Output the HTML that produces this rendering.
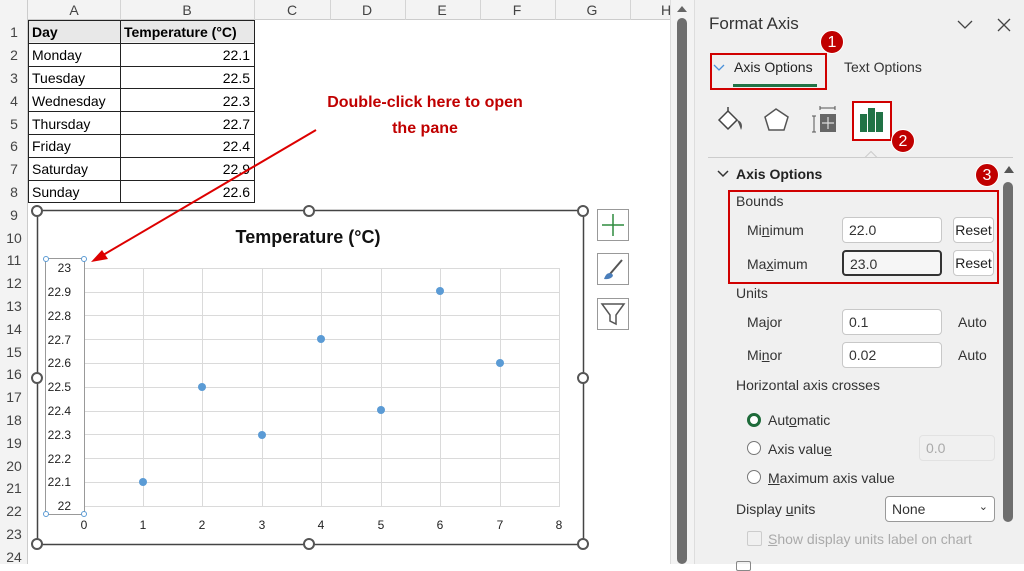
<!DOCTYPE html>
<html><head><meta charset="utf-8"><style>
*{margin:0;padding:0;box-sizing:border-box}
body{width:1024px;height:564px;overflow:hidden;background:#fff;font-family:"Liberation Sans",sans-serif;position:relative}
.a{position:absolute}
.t{position:absolute;white-space:nowrap}
.cell{position:absolute;font-size:14px;color:#000}
.pn{font-size:14px;color:#333}
.inp{position:absolute;background:#fff;border:1px solid #c8c8c8;border-radius:4px;font-size:14px;color:#333;padding:4px 6px}
.btn{position:absolute;background:#fff;border:1px solid #c8c8c8;border-radius:4px;font-size:14px;color:#222;text-align:center;padding-top:4px}
.badge{position:absolute;width:24px;height:24px;border-radius:12px;background:#c00000;color:#fff;font-size:16px;text-align:center;line-height:24px;border:1px solid #fff}
.rad{position:absolute;width:14px;height:14px;border-radius:7px;border:1px solid #777;background:#fff}
</style></head><body>
<!-- sheet headers -->
<div class="a" style="left:0;top:0;width:670px;height:20px;background:#f3f3f3;border-bottom:1px solid #ccc"></div>
<div class="a" style="left:0;top:0;width:28px;height:564px;background:#f3f3f3;border-right:1px solid #ccc"></div>
<svg class="a" style="left:0;top:0" width="670" height="564">
<g stroke="#d4d4d4" stroke-width="1">
<line x1="120.5" y1="0" x2="120.5" y2="20"/><line x1="254.5" y1="0" x2="254.5" y2="20"/><line x1="330.5" y1="0" x2="330.5" y2="20"/><line x1="405.5" y1="0" x2="405.5" y2="20"/><line x1="480.5" y1="0" x2="480.5" y2="20"/><line x1="555.5" y1="0" x2="555.5" y2="20"/><line x1="630.5" y1="0" x2="630.5" y2="20"/>
</g>
<g font-family="Liberation Sans" font-size="14" fill="#444" text-anchor="middle">
<text x="74" y="15">A</text><text x="187" y="15">B</text><text x="292" y="15">C</text><text x="367" y="15">D</text><text x="442" y="15">E</text><text x="517" y="15">F</text><text x="592" y="15">G</text><text x="666" y="15">H</text>
</g>
<g font-family="Liberation Sans" font-size="14" fill="#444" text-anchor="middle" id="rn"></g>
<g stroke="#e2e2e2"><script></script></g>
</svg>
<svg class="a" style="left:0;top:0" width="670" height="564">
<g font-family="Liberation Sans" font-size="14" fill="#444" text-anchor="middle">
<text x="14" y="37">1</text><text x="14" y="60">2</text><text x="14" y="83">3</text><text x="14" y="106">4</text><text x="14" y="129">5</text><text x="14" y="151">6</text><text x="14" y="174">7</text><text x="14" y="197">8</text><text x="14" y="220">9</text><text x="14" y="243">10</text><text x="14" y="265">11</text><text x="14" y="288">12</text><text x="14" y="311">13</text><text x="14" y="334">14</text><text x="14" y="357">15</text><text x="14" y="379">16</text><text x="14" y="402">17</text><text x="14" y="425">18</text><text x="14" y="448">19</text><text x="14" y="471">20</text><text x="14" y="493">21</text><text x="14" y="516">22</text><text x="14" y="539">23</text><text x="14" y="562">24</text>
</g>
<rect x="28.5" y="20.5" width="92" height="22" fill="#e8e8e8"/>
<rect x="120.5" y="20.5" width="134" height="22" fill="#e8e8e8"/>
<g stroke="#222" fill="none">
<rect x="28.5" y="20.5" width="226" height="182"/>
<line x1="120.5" y1="20" x2="120.5" y2="203"/>
<line x1="28" y1="43.5" x2="255" y2="43.5"/><line x1="28" y1="66.5" x2="255" y2="66.5"/><line x1="28" y1="88.5" x2="255" y2="88.5"/><line x1="28" y1="111.5" x2="255" y2="111.5"/><line x1="28" y1="134.5" x2="255" y2="134.5"/><line x1="28" y1="157.5" x2="255" y2="157.5"/><line x1="28" y1="180.5" x2="255" y2="180.5"/>
</g>
<g font-family="Liberation Sans" font-size="14" fill="#000">
<text x="32" y="37" font-weight="bold">Day</text><text x="124" y="37" font-weight="bold">Temperature (°C)</text>
<text x="32" y="60">Monday</text><text x="32" y="83">Tuesday</text><text x="32" y="106">Wednesday</text><text x="32" y="129">Thursday</text><text x="32" y="151">Friday</text><text x="32" y="174">Saturday</text><text x="32" y="197">Sunday</text>
</g>
<g font-family="Liberation Sans" font-size="14" fill="#000" text-anchor="end">
<text x="250" y="60">22.1</text><text x="250" y="83">22.5</text><text x="250" y="106">22.3</text><text x="250" y="129">22.7</text><text x="250" y="151">22.4</text><text x="250" y="174">22.9</text><text x="250" y="197">22.6</text>
</g>
<!-- chart -->
<rect x="37.5" y="210.5" width="546" height="334" fill="#fff" stroke="#444" stroke-width="1.5"/>
<text x="308" y="243" font-family="Liberation Sans" font-size="18" font-weight="bold" text-anchor="middle" fill="#111">Temperature (°C)</text>
<g stroke="#dadada">
<line x1="84" y1="268.5" x2="560" y2="268.5"/><line x1="84" y1="292.5" x2="560" y2="292.5"/><line x1="84" y1="315.5" x2="560" y2="315.5"/><line x1="84" y1="339.5" x2="560" y2="339.5"/><line x1="84" y1="363.5" x2="560" y2="363.5"/><line x1="84" y1="387.5" x2="560" y2="387.5"/><line x1="84" y1="411.5" x2="560" y2="411.5"/><line x1="84" y1="434.5" x2="560" y2="434.5"/><line x1="84" y1="458.5" x2="560" y2="458.5"/><line x1="84" y1="482.5" x2="560" y2="482.5"/><line x1="84" y1="506.5" x2="560" y2="506.5"/>
<line x1="143.5" y1="268" x2="143.5" y2="506"/><line x1="202.5" y1="268" x2="202.5" y2="506"/><line x1="262.5" y1="268" x2="262.5" y2="506"/><line x1="321.5" y1="268" x2="321.5" y2="506"/><line x1="381.5" y1="268" x2="381.5" y2="506"/><line x1="440.5" y1="268" x2="440.5" y2="506"/><line x1="500.5" y1="268" x2="500.5" y2="506"/><line x1="559.5" y1="268" x2="559.5" y2="506"/>
</g>
<rect x="45.5" y="258.5" width="39" height="256" fill="none" stroke="#999"/>
<g fill="#fff" stroke="#5b9bd5"><circle cx="46" cy="259" r="2.5"/><circle cx="84" cy="259" r="2.5"/><circle cx="46" cy="514" r="2.5"/><circle cx="84" cy="514" r="2.5"/></g>
<g font-family="Liberation Sans" font-size="12" fill="#222" text-anchor="end">
<text x="71" y="272">23</text><text x="71" y="296">22.9</text><text x="71" y="320">22.8</text><text x="71" y="344">22.7</text><text x="71" y="367">22.6</text><text x="71" y="391">22.5</text><text x="71" y="415">22.4</text><text x="71" y="439">22.3</text><text x="71" y="463">22.2</text><text x="71" y="486">22.1</text><text x="71" y="510">22</text>
</g>
<g font-family="Liberation Sans" font-size="12" fill="#222" text-anchor="middle">
<text x="84" y="529">0</text><text x="143" y="529">1</text><text x="202" y="529">2</text><text x="262" y="529">3</text><text x="321" y="529">4</text><text x="381" y="529">5</text><text x="440" y="529">6</text><text x="500" y="529">7</text><text x="559" y="529">8</text>
</g>
<g fill="#5b9bd5"><circle cx="143" cy="482" r="4"/><circle cx="202" cy="387" r="4"/><circle cx="262" cy="435" r="4"/><circle cx="321" cy="339" r="4"/><circle cx="381" cy="410" r="4"/><circle cx="440" cy="291" r="4"/><circle cx="500" cy="363" r="4"/></g>
<g fill="#fff" stroke="#555" stroke-width="2"><circle cx="37" cy="211" r="5"/><circle cx="309" cy="211" r="5"/><circle cx="583" cy="211" r="5"/><circle cx="37" cy="378" r="5"/><circle cx="583" cy="378" r="5"/><circle cx="37" cy="544" r="5"/><circle cx="309" cy="544" r="5"/><circle cx="583" cy="544" r="5"/></g>
<!-- side buttons -->
<g fill="#fff" stroke="#999"><rect x="597.5" y="209.5" width="31" height="31"/><rect x="597.5" y="253.5" width="31" height="31"/><rect x="597.5" y="298.5" width="31" height="31"/></g>
<path d="M613 214v22M602 225h22" stroke="#2e8b3e" stroke-width="1.5"/>
<path d="M622 260l-12 14" stroke="#555" stroke-width="2"/><path d="M604 279c2-6 5-7 8-5s-2 6-8 5z" fill="#4a7ebb"/>
<path d="M602 304h22l-8 11v9l-6-3v-6z" fill="none" stroke="#555" stroke-width="1.5"/>
<!-- arrow -->
<path d="M316 130L98 258" stroke="#d00" stroke-width="2"/>
<path d="M91 262l17-3-6-9z" fill="#d00"/>
<text x="425" y="107" font-family="Liberation Sans" font-size="16" font-weight="bold" fill="#c00000" text-anchor="middle">Double-click here to open</text>
<text x="425" y="133" font-family="Liberation Sans" font-size="16" font-weight="bold" fill="#c00000" text-anchor="middle">the pane</text>
</svg>
<!-- scrollbar -->
<div class="a" style="left:670px;top:0;width:24px;height:564px;background:#f3f3f3;border-left:1px solid #ddd"></div>
<svg class="a" style="left:670px;top:0" width="24" height="20"><path d="M7 12l5-6 5 6z" fill="#666"/></svg>
<div class="a" style="left:677px;top:18px;width:10px;height:546px;background:#6e6e6e;border-radius:5px"></div>
<!-- pane -->
<div class="a" style="left:694px;top:0;width:330px;height:564px;background:#f0f0f0;border-left:1px solid #ddd"></div>
<div class="t" style="left:709px;top:14px;font-size:17px;color:#333">Format Axis</div>
<svg class="a" style="left:955px;top:16px" width="60" height="20"><path d="M3 5l7 7 7-7" fill="none" stroke="#444" stroke-width="1.3"/><path d="M43 3l12 12M55 3L43 15" stroke="#444" stroke-width="1.3"/></svg>
<svg class="a" style="left:712px;top:62px" width="14" height="12"><path d="M2 3l5 5 5-5" fill="none" stroke="#4a90d9" stroke-width="1.3"/></svg>
<div class="t" style="left:734px;top:59px;font-size:14px;color:#222">Axis Options</div>
<div class="a" style="left:733px;top:84px;width:84px;height:3px;background:#217346"></div>
<div class="t" style="left:844px;top:59px;font-size:14px;color:#333">Text Options</div>
<div class="a" style="left:710px;top:53px;width:117px;height:37px;border:2px solid #d00000"></div>
<div class="badge" style="left:820px;top:30px">1</div>
<!-- icons -->
<svg class="a" style="left:710px;top:100px" width="190" height="60">
<path d="M9 20l9-9 9 9-9 9z" fill="#fff" stroke="#444" stroke-width="1.5"/><path d="M18 11v-4" stroke="#444" stroke-width="1.5"/><path d="M27 20c5 1 6 6 4 10-1-3-2-6-4-10z" fill="#555"/>
<path d="M66 9l12 8-4 13h-15l-4-13z" fill="#fff" stroke="#555" stroke-width="1.5"/>
<path d="M110 8h15M110 6v4M125 6v4M104 16v16M102 16h4M102 32h4" stroke="#555" stroke-width="1"/><rect x="110" y="14" width="16" height="18" fill="#666"/><path d="M118 17v12M112 23h12" stroke="#ddd" stroke-width="1.2"/>
<rect x="143" y="3" width="38" height="38" fill="#fff"/>
<rect x="150" y="14" width="7" height="18" fill="#217346"/><rect x="158" y="8" width="7" height="24" fill="#217346"/><rect x="166" y="12" width="7" height="20" fill="#217346"/>
<path d="M0 57.5h155l6-6 6 6h140" fill="none" stroke="#ccc"/>
</svg>
<div class="a" style="left:852px;top:101px;width:40px;height:40px;border:2px solid #d00000"></div>
<div class="badge" style="left:891px;top:129px">2</div>
<div class="a" style="left:708px;top:157px;width:305px;height:1px;background:#ccc"></div>
<!-- section -->
<svg class="a" style="left:716px;top:169px" width="14" height="10"><path d="M2 2l5 5 5-5" fill="none" stroke="#333" stroke-width="1.5"/></svg>
<div class="t" style="left:736px;top:166px;font-size:14px;font-weight:bold;color:#222">Axis Options</div>
<svg class="a" style="left:1002px;top:163px" width="14" height="12"><path d="M2 10l5-7 5 7z" fill="#555"/></svg>
<div class="a" style="left:1003px;top:182px;width:10px;height:340px;background:#6e6e6e;border-radius:5px"></div>
<div class="t pn" style="left:736px;top:193px">Bounds</div>
<div class="t pn" style="left:747px;top:222px">Mi<u>n</u>imum</div>
<div class="inp" style="left:842px;top:217px;width:100px;height:26px">22.0</div>
<div class="btn" style="left:953px;top:217px;width:41px;height:26px">Reset</div>
<div class="t pn" style="left:747px;top:256px">Ma<u>x</u>imum</div>
<div class="inp" style="left:842px;top:250px;width:100px;height:26px;border:2px solid #333;background:#f6f6f6">23.0</div>
<div class="btn" style="left:953px;top:250px;width:41px;height:26px">Reset</div>
<div class="a" style="left:728px;top:190px;width:271px;height:94px;border:2px solid #d00000"></div>
<div class="badge" style="left:975px;top:163px">3</div>
<div class="t pn" style="left:736px;top:285px">Units</div>
<div class="t pn" style="left:747px;top:314px">Ma<u>j</u>or</div>
<div class="inp" style="left:842px;top:309px;width:100px;height:26px">0.1</div>
<div class="t pn" style="left:958px;top:314px">Auto</div>
<div class="t pn" style="left:747px;top:347px">Mi<u>n</u>or</div>
<div class="inp" style="left:842px;top:342px;width:100px;height:26px">0.02</div>
<div class="t pn" style="left:958px;top:347px">Auto</div>
<div class="t pn" style="left:736px;top:377px">Horizontal axis crosses</div>
<div class="rad" style="left:747px;top:413px;border:3px solid #1e6b3a"></div>
<div class="t pn" style="left:768px;top:412px">Aut<u>o</u>matic</div>
<div class="rad" style="left:747px;top:441px"></div>
<div class="t pn" style="left:768px;top:441px">Axis valu<u>e</u></div>
<div class="inp" style="left:919px;top:435px;width:76px;height:26px;border-color:#e2e2e2;background:#f0f0f0;color:#aaa">0.0</div>
<div class="rad" style="left:747px;top:470px"></div>
<div class="t pn" style="left:768px;top:470px"><u>M</u>aximum axis value</div>
<div class="t pn" style="left:736px;top:501px">Display <u>u</u>nits</div>
<div class="inp" style="left:885px;top:496px;width:110px;height:26px;border-color:#999">None<span style="position:absolute;right:6px;top:3px;font-size:11px">⌄</span></div>
<div class="a" style="left:747px;top:531px;width:15px;height:15px;border:1px solid #ccc;border-radius:2px"></div>
<div class="t" style="left:768px;top:531px;font-size:14px;color:#aaa"><u>S</u>how display units label on chart</div>
<div class="a" style="left:736px;top:561px;width:15px;height:10px;border:1px solid #888;border-radius:2px"></div>
</body></html>
